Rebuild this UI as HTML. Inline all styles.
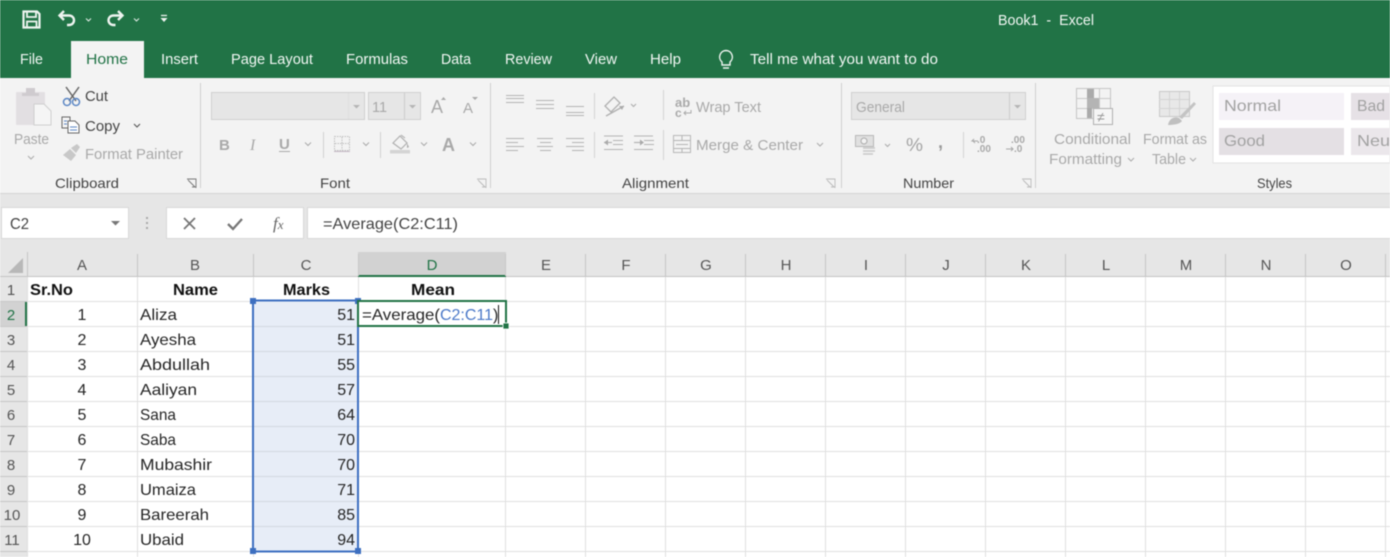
<!DOCTYPE html>
<html><head><meta charset="utf-8"><title>Book1 - Excel</title>
<style>
html,body{margin:0;padding:0;background:#fff;width:1390px;height:557px;overflow:hidden}
svg{display:block;filter:blur(.45px)}
text{font-family:"Liberation Sans",sans-serif;font-size:15px;white-space:pre}
.w{fill:#f2f7f4}.g{fill:#a9a9a9}.d{fill:#444}.l{fill:#444;font-size:14px}
.c{fill:#262626;font-size:16px}.b{font-weight:bold;fill:#111}
.h{fill:#555;font-size:15px}
.lg{stroke:#e0e0e0;stroke-width:1}
.ic{fill:none;stroke:#b5b5b5;stroke-width:1.3}
.ar{fill:none;stroke:#aaa;stroke-width:1}
.ln{stroke:#b8b8b8;stroke-width:1}
</style></head><body>
<svg width="1390" height="557" viewBox="0 0 1390 557" xmlns="http://www.w3.org/2000/svg">
<rect width="1390" height="557" fill="#fff"/>
<rect width="1390" height="78" fill="#217346"/>
<!-- QAT -->
<path d="M23.500 11.500h13.500l2.500 2.500v13.500h-16z" fill="none" stroke="#eef4f0" stroke-width="2.200"/>
<path d="M27 11.500v5.500h9v-5.500M27 27.500v-6h9.500v6" fill="none" stroke="#eef4f0" stroke-width="1.800"/>
<path d="M64 11l-4.500 4.500 4.500 4.500M60 15.500h9c3 0 5 2.200 5 4.800s-2 4.700-5 4.700h-2" fill="none" stroke="#eef4f0" stroke-width="2.400"/>
<path d="M86 18.500l2.500 2.500 2.500-2.500M134 18.500l2.500 2.500 2.500-2.500" fill="none" stroke="#dfeae4" stroke-width="1.100"/>
<path d="M118 11l4.500 4.500-4.500 4.500M122.500 15.500h-9c-3 0-5 2.200-5 4.800s2 4.700 5 4.700h2" fill="none" stroke="#eef4f0" stroke-width="2.400"/>
<path d="M161 15.500h6" stroke="#eef4f0" stroke-width="1.300"/><path d="M160.500 18h7l-3.500 4z" fill="#eef4f0"/>
<text class="w" x="998" y="25" textLength="96" lengthAdjust="spacingAndGlyphs">Book1  -  Excel</text>
<!-- Tabs -->
<rect x="71" y="41" width="73" height="38" fill="#f3f3f3"/>
<text class="w" x="20" y="64" textLength="23" lengthAdjust="spacingAndGlyphs">File</text>
<text x="86" y="64" fill="#217346" textLength="42" lengthAdjust="spacingAndGlyphs">Home</text>
<text class="w" x="161" y="64" textLength="37" lengthAdjust="spacingAndGlyphs">Insert</text>
<text class="w" x="231" y="64" textLength="82" lengthAdjust="spacingAndGlyphs">Page Layout</text>
<text class="w" x="346" y="64" textLength="62" lengthAdjust="spacingAndGlyphs">Formulas</text>
<text class="w" x="441" y="64" textLength="30" lengthAdjust="spacingAndGlyphs">Data</text>
<text class="w" x="505" y="64" textLength="47" lengthAdjust="spacingAndGlyphs">Review</text>
<text class="w" x="585" y="64" textLength="32" lengthAdjust="spacingAndGlyphs">View</text>
<text class="w" x="650" y="64" textLength="31" lengthAdjust="spacingAndGlyphs">Help</text>
<path d="M726 50.500a6.500 6.500 0 0 1 4 11.500v3h-8v-3a6.500 6.500 0 0 1 4-11.500zM723 68h6" fill="none" stroke="#eef4f0" stroke-width="1.400"/>
<text class="w" x="750" y="64" textLength="188" lengthAdjust="spacingAndGlyphs">Tell me what you want to do</text>
<!-- Ribbon -->
<rect y="78" width="1390" height="116" fill="#f3f3f3"/>
<rect y="193" width="1390" height="1" fill="#d4d4d4"/>
<rect y="194" width="1390" height="58" fill="#e6e6e6"/>
<g stroke="#cfcfcf"><path d="M200.500 83v105M490.500 83v105M841.500 83v105M1035.500 83v105"/></g>
<!-- Clipboard -->
<rect x="16" y="92" width="29" height="33" rx="1" fill="#e2dfe2"/><rect x="26" y="88" width="9" height="7" fill="#cfcbcf"/><rect x="22" y="93" width="17" height="3" fill="#cfcbcf"/>
<path d="M34 104h10l7 7v14H34z" fill="#f5f5f5" stroke="#cfcfcf"/>
<text class="g" x="14" y="144" textLength="35" lengthAdjust="spacingAndGlyphs">Paste</text>
<path d="M28 156l3 3 3-3" class="ar"/>
<path d="M66 87l10 14M79 87L69 101" stroke="#666" stroke-width="1.500" fill="none"/><circle cx="67" cy="102" r="3.500" fill="none" stroke="#5b86c4" stroke-width="1.500"/><circle cx="76" cy="102" r="3.500" fill="none" stroke="#5b86c4" stroke-width="1.500"/>
<text class="d" x="85" y="101" textLength="23" lengthAdjust="spacingAndGlyphs">Cut</text>
<path d="M62 117h8v11h-8z" fill="#f5f5f5" stroke="#666"/><path d="M68 121h7l4 4v8H68z" fill="#fff" stroke="#666"/><path d="M64 121h3M64 124h3M70 127h7M70 130h7" stroke="#5b86c4"/>
<text class="d" x="85" y="131" textLength="35" lengthAdjust="spacingAndGlyphs">Copy</text>
<path d="M134 124l3 3 3-3" fill="none" stroke="#555" stroke-width="1.100"/>
<path d="M63 155l7-6 6 6-5 6zM71 148l6-4 3 3-4 6z" fill="#c8c8c8"/>
<text class="g" x="85" y="159" textLength="98" lengthAdjust="spacingAndGlyphs">Format Painter</text>
<text class="l" x="55" y="188" textLength="64" lengthAdjust="spacingAndGlyphs">Clipboard</text>
<path d="M187 179h9v9M188 180l7 7M192 187h4v-4" fill="none" stroke="#777" stroke-width=".9"/>
<!-- Font -->
<rect x="211.500" y="92.500" width="153" height="27" fill="#e6e6e6" stroke="#d0d0d0"/><path d="M348.500 93v26" class="lg" stroke="#ccc"/>
<path d="M353 105l3.500 3.500 3.500-3.500z" fill="#b5b5b5"/>
<rect x="368.500" y="92.500" width="52" height="27" fill="#e6e6e6" stroke="#d0d0d0"/><path d="M404.500 93v26" stroke="#ccc"/>
<path d="M409 105l3.500 3.500 3.500-3.500z" fill="#b5b5b5"/>
<text class="g" x="372" y="112" textLength="15" lengthAdjust="spacingAndGlyphs">11</text>
<text class="g" x="431" y="113" style="font-size:18px">A</text><path d="M441 100l2.500-3 2.500 3z" fill="#aaa"/>
<text class="g" x="463" y="113" style="font-size:15px">A</text><path d="M472 97h6l-3 3z" fill="#aaa"/>
<text x="219" y="150" class="g" style="font-size:15px;font-weight:bold">B</text>
<text x="250" y="150" class="g" style="font-size:16px;font-style:italic;font-family:'Liberation Serif',serif">I</text>
<text x="279" y="149" class="g" style="font-size:15px;font-weight:bold">U</text><path d="M279 151.500h11" stroke="#aaa"/>
<path d="M305 142.500l3 3 3-3M363 142.500l3 3 3-3M421 142.500l3 3 3-3M470 142.500l3 3 3-3" class="ar"/>
<path d="M323.500 132v26M380.500 132v26" stroke="#d0d0d0"/>
<rect x="334.500" y="136.500" width="15" height="14" fill="none" stroke="#c0c0c0" stroke-dasharray="1.500 1"/><path d="M342 137v13M335 143.500h14" stroke="#c0c0c0" stroke-dasharray="1.500 1"/><path d="M334 151.500h16" stroke="#c4b8c4"/>
<path d="M393 143l7-7 7 7-6 6z" fill="none" stroke="#b0b0b0" stroke-width="1.200"/><path d="M401 135l4 3" stroke="#aaa"/><path d="M407 143l2 4-2 1z" fill="#aaa"/><rect x="390" y="150" width="20" height="3.500" fill="#d4d4d4"/>
<text x="442" y="151" class="g" style="font-size:18px;font-weight:bold">A</text>
<text class="l" x="320" y="188" textLength="30" lengthAdjust="spacingAndGlyphs">Font</text>
<path d="M477 179h9v9M478 180l7 7M482 187h4v-4" fill="none" stroke="#bbb" stroke-width=".9"/>
<!-- Alignment -->
<g stroke="#b4b4b4" stroke-width="1"><path d="M506 95.500h18M506 98.500h18M506 102.500h18M536 100.500h18M536 104.500h18M536 108.500h18M566 106.500h18M566 112.500h18M566 115.500h18"/>
<path d="M506 138.500h18M506 142.500h12M506 146.500h18M506 150.500h12M537 138.500h16M540 142.500h11M537 146.500h16M540 150.500h11M566 138.500h18M572 142.500h12M566 146.500h18M572 150.500h12"/></g>
<path d="M594.500 93v26M594.500 132v26M663.500 90v30M663.500 130v30" stroke="#d4d4d4"/>
<path d="M605 106l9-9 6 6-9 9zM606 116l18-10" fill="none" stroke="#b0b0b0" stroke-width="1.300"/><path d="M624 106l-5 0 3 4z" fill="#aaa"/>
<path d="M631 104l2.500 2.500 2.500-2.500" class="ar"/>
<g stroke="#b4b4b4"><path d="M604 136h19M613 140.500h10M613 144.500h10M604 149.500h19M634 136h19M644 140.500h10M644 144.500h10M634 149.500h19"/><path d="M604 142.500h8M641 142.500h-7" stroke-width="1.300"/></g><path d="M604 142.500l4-3v6zM644 142.500l-4-3v6z" fill="#aaa"/>
<text x="675" y="107" style="font-size:13px;font-weight:bold" fill="#aaa">ab</text><text x="675" y="117" style="font-size:12px;font-weight:bold" fill="#aaa">c</text>
<path d="M691 110v3h-7M686 111l-2 2 2 2" class="ar"/>
<text class="g" x="696" y="112" textLength="65" lengthAdjust="spacingAndGlyphs">Wrap Text</text>
<rect x="673.500" y="135.500" width="17" height="17" fill="none" stroke="#b8b8b8"/><path d="M674 140.500h16M674 148.500h16M682 136v4M682 149v3M676 144.500h12" stroke="#b4b4b4"/>
<text class="g" x="696" y="150" textLength="107" lengthAdjust="spacingAndGlyphs">Merge &amp; Center</text>
<path d="M817 143l3 3 3-3" class="ar"/>
<text class="l" x="622" y="188" textLength="67" lengthAdjust="spacingAndGlyphs">Alignment</text>
<path d="M826 179h9v9M827 180l7 7M831 187h4v-4" fill="none" stroke="#bbb" stroke-width=".9"/>
<!-- Number -->
<rect x="851.500" y="92.500" width="174" height="27" fill="#e6e6e6" stroke="#d0d0d0"/><path d="M1009.500 93v26" stroke="#ccc"/>
<path d="M1014 105l3.500 3.500 3.500-3.500z" fill="#b5b5b5"/>
<text class="g" x="856" y="112" textLength="49" lengthAdjust="spacingAndGlyphs">General</text>
<rect x="855.500" y="135.500" width="18" height="11" fill="#e0e0e0" stroke="#b8b8b8"/><circle cx="864" cy="141" r="3" fill="#f3f3f3" stroke="#aaa"/><path d="M863 148h12M863 151h12M863 154h10" stroke="#c8c8c8" stroke-width="1.500"/>
<path d="M885 144l2.500 2.500 2.500-2.500" class="ar"/>
<text x="906" y="151" fill="#a4a4a4" style="font-size:18px" textLength="17" lengthAdjust="spacingAndGlyphs">%</text>
<text x="938" y="148" fill="#999" style="font-size:18px;font-weight:bold">,</text>
<path d="M963.500 132v26" stroke="#d4d4d4"/>
<text x="977" y="143" class="g" style="font-size:10px;font-weight:bold">.0</text><text x="977" y="152" class="g" style="font-size:10px;font-weight:bold">.00</text><path d="M973 141h-1l2-2M973 141l2 2M973 141h5" stroke="#a8a8a8" fill="none"/>
<text x="1011" y="143" class="g" style="font-size:10px;font-weight:bold">.00</text><text x="1014" y="152" class="g" style="font-size:10px;font-weight:bold">.0</text><path d="M1006 149h7M1011 147l2 2-2 2" stroke="#a8a8a8" fill="none"/>
<text class="l" x="903" y="188" textLength="51" lengthAdjust="spacingAndGlyphs">Number</text>
<path d="M1022 179h9v9M1023 180l7 7M1027 187h4v-4" fill="none" stroke="#bbb" stroke-width=".9"/>
<!-- Styles -->
<rect x="1076.500" y="88.500" width="34" height="30" fill="#f3f3f3" stroke="#c4c4c4"/>
<path d="M1076 98.500h34M1076 108.500h34M1087.500 88v30M1099.500 88v30" stroke="#c8c8c8"/>
<rect x="1087" y="89" width="7" height="9" fill="#aaa"/><rect x="1087" y="98" width="12" height="10" fill="#b4b4b4"/><rect x="1087" y="108" width="5" height="10" fill="#aaa"/>
<rect x="1093.500" y="108.500" width="19" height="16" fill="#f5f5f5" stroke="#b0b0b0"/><text x="1097" y="122" fill="#999" style="font-size:14px">≠</text>
<rect x="1159.500" y="91.500" width="30" height="25" fill="#e8e8e8" stroke="#c8c8c8"/>
<path d="M1159 99.500h30M1159 108.500h30M1169.500 92v24M1179.500 92v24" stroke="#d4d4d4"/>
<path d="M1194 102l2 2-14 15-3-2z" fill="#c4c4c4"/><path d="M1168 125c1-6 6-9 11-7l3 3c-2 3-8 4-14 4z" fill="#c0c0c0"/>
<text class="g" x="1054" y="144" textLength="77" lengthAdjust="spacingAndGlyphs">Conditional</text>
<text class="g" x="1049" y="164" textLength="73" lengthAdjust="spacingAndGlyphs">Formatting</text>
<path d="M1128 158l3 3 3-3M1190 158l3 3 3-3" class="ar"/>
<text class="g" x="1143" y="144" textLength="64" lengthAdjust="spacingAndGlyphs">Format as</text>
<text class="g" x="1152" y="164" textLength="34" lengthAdjust="spacingAndGlyphs">Table</text>
<rect x="1213" y="86" width="177" height="77" fill="#fff" stroke="#e2e2e2"/>
<rect x="1219" y="93" width="125" height="27" fill="#f5f2f7"/><rect x="1351" y="93" width="39" height="27" fill="#e6e1e6"/>
<rect x="1219" y="128" width="125" height="27" fill="#e4e0e4"/><rect x="1351" y="128" width="39" height="27" fill="#ebe7eb"/>
<text fill="#a2a2a2" style="font-size:16px" x="1224" y="111" textLength="57" lengthAdjust="spacingAndGlyphs">Normal</text>
<text fill="#a2a2a2" style="font-size:16px" x="1357" y="111" textLength="28" lengthAdjust="spacingAndGlyphs">Bad</text>
<text fill="#a2a2a2" style="font-size:16px" x="1224" y="146" textLength="41" lengthAdjust="spacingAndGlyphs">Good</text>
<text fill="#a2a2a2" style="font-size:16px" x="1357" y="146" textLength="33" lengthAdjust="spacingAndGlyphs">Neu</text>
<text class="l" x="1257" y="188" textLength="35" lengthAdjust="spacingAndGlyphs">Styles</text>
<!-- Formula bar -->
<rect x="1.500" y="207.500" width="127" height="31" fill="#fff" stroke="#d8d8d8"/>
<text fill="#444" style="font-size:16px" x="10" y="229" textLength="19" lengthAdjust="spacingAndGlyphs">C2</text>
<path d="M111 221h9l-4.500 4.500z" fill="#777"/>
<g fill="#aaa"><rect x="146" y="217" width="2" height="2"/><rect x="146" y="222" width="2" height="2"/><rect x="146" y="227" width="2" height="2"/></g>
<rect x="166.500" y="207.500" width="137" height="31" fill="#fff" stroke="#d8d8d8"/>
<path d="M184 218l11 11M195 218l-11 11" stroke="#777" stroke-width="1.800"/>
<path d="M228 224l5 5 9-10" fill="none" stroke="#777" stroke-width="2.300"/>
<text x="273" y="229" fill="#666" style="font-family:'Liberation Serif',serif;font-style:italic;font-size:17px">f<tspan style="font-size:13px">x</tspan></text>
<rect x="307.500" y="207.500" width="1083" height="31" fill="#fff" stroke="#d8d8d8"/>
<text fill="#444" style="font-size:16px" x="323" y="229" textLength="135" lengthAdjust="spacingAndGlyphs">=Average(C2:C11)</text>
<!-- Sheet headers -->
<rect y="252" width="1390" height="25" fill="#e6e6e6"/>
<rect y="277" width="27" height="280" fill="#e6e6e6"/>
<path d="M8 273l15-15v15z" fill="#b8b8b8"/>
<rect x="358" y="252" width="148" height="24" fill="#d2d2d2"/>
<rect y="302" width="25" height="24" fill="#d2d2d2"/>
<rect x="25" y="301" width="2" height="25" fill="#217346"/>
<rect y="276" width="1390" height="1" fill="#c4c4c4"/>
<rect x="358" y="275" width="148" height="2" fill="#217346"/>
<!-- Grid -->
<g stroke="#e0e0e0" stroke-width="1">
<path d="M27.500 277V557M137.500 277V557M253.500 277V557M358.500 277V557M505.500 277V557M585.500 277V557M665.500 277V557M745.500 277V557M825.500 277V557M905.500 277V557M985.500 277V557M1065.500 277V557M1145.500 277V557M1225.500 277V557M1305.500 277V557M1385.500 277V557"/>
<path d="M27 301.500H1390M27 326.500H1390M27 351.500H1390M27 376.500H1390M27 401.500H1390M27 426.500H1390M27 451.500H1390M27 476.500H1390M27 501.500H1390M27 526.500H1390M27 551.500H1390"/>
</g>
<g stroke="#c6c6c6"><path d="M27.500 252v25M137.500 254v22M253.500 254v22M358.500 254v22M505.500 254v22M585.500 254v22M665.500 254v22M745.500 254v22M825.500 254v22M905.500 254v22M985.500 254v22M1065.500 254v22M1145.500 254v22M1225.500 254v22M1305.500 254v22M1385.500 254v22"/>
<path d="M0 301.500h27M0 326.500h27M0 351.500h27M0 376.500h27M0 401.500h27M0 426.500h27M0 451.500h27M0 476.500h27M0 501.500h27M0 526.500h27M0 551.500h27"/></g>
<g class="h" text-anchor="middle">
<text class="h" x="82" y="270">A</text><text class="h" x="195" y="270">B</text><text class="h" x="306" y="270">C</text><text x="432" y="270" fill="#217346">D</text><text class="h" x="546" y="270">E</text><text class="h" x="626" y="270">F</text><text class="h" x="706" y="270">G</text><text class="h" x="786" y="270">H</text><text class="h" x="866" y="270">I</text><text class="h" x="946" y="270">J</text><text class="h" x="1026" y="270">K</text><text class="h" x="1106" y="270">L</text><text class="h" x="1186" y="270">M</text><text class="h" x="1266" y="270">N</text><text class="h" x="1346" y="270">O</text>
<text class="h" x="11" y="295">1</text><text x="11" y="320" fill="#217346">2</text><text class="h" x="11" y="345">3</text><text class="h" x="11" y="370">4</text><text class="h" x="11" y="395">5</text><text class="h" x="11" y="420">6</text><text class="h" x="11" y="445">7</text><text class="h" x="11" y="470">8</text><text class="h" x="11" y="495">9</text><text class="h" x="12" y="520">10</text><text class="h" x="12" y="545">11</text>
</g>
<!-- Selection fill -->
<rect x="254" y="301" width="104" height="250" fill="#e7edf7"/>
<g stroke="#d3d8e0"><path d="M254 326.500h104M254 351.500h104M254 376.500h104M254 401.500h104M254 426.500h104M254 451.500h104M254 476.500h104M254 501.500h104M254 526.500h104"/></g>
<!-- Cells -->
<text class="c b" x="30" y="295" textLength="43" lengthAdjust="spacingAndGlyphs">Sr.No</text>
<text class="c b" x="173" y="295" textLength="45" lengthAdjust="spacingAndGlyphs">Name</text>
<text class="c b" x="283" y="295" textLength="47" lengthAdjust="spacingAndGlyphs">Marks</text>
<text class="c b" x="411" y="295" textLength="44" lengthAdjust="spacingAndGlyphs">Mean</text>
<g text-anchor="middle">
<text class="c" x="82" y="320">1</text><text class="c" x="82" y="345">2</text><text class="c" x="82" y="370">3</text><text class="c" x="82" y="395">4</text><text class="c" x="82" y="420">5</text><text class="c" x="82" y="445">6</text><text class="c" x="82" y="470">7</text><text class="c" x="82" y="495">8</text><text class="c" x="82" y="520">9</text><text class="c" x="82" y="545">10</text>
</g>
<text class="c" x="140" y="320" textLength="37" lengthAdjust="spacingAndGlyphs">Aliza</text>
<text class="c" x="140" y="345" textLength="56" lengthAdjust="spacingAndGlyphs">Ayesha</text>
<text class="c" x="140" y="370" textLength="70" lengthAdjust="spacingAndGlyphs">Abdullah</text>
<text class="c" x="140" y="395" textLength="57" lengthAdjust="spacingAndGlyphs">Aaliyan</text>
<text class="c" x="140" y="420" textLength="36" lengthAdjust="spacingAndGlyphs">Sana</text>
<text class="c" x="140" y="445" textLength="36" lengthAdjust="spacingAndGlyphs">Saba</text>
<text class="c" x="140" y="470" textLength="72" lengthAdjust="spacingAndGlyphs">Mubashir</text>
<text class="c" x="140" y="495" textLength="56" lengthAdjust="spacingAndGlyphs">Umaiza</text>
<text class="c" x="140" y="520" textLength="69" lengthAdjust="spacingAndGlyphs">Bareerah</text>
<text class="c" x="140" y="545" textLength="44" lengthAdjust="spacingAndGlyphs">Ubaid</text>
<g text-anchor="end">
<text class="c" x="355" y="320">51</text><text class="c" x="355" y="345">51</text><text class="c" x="355" y="370">55</text><text class="c" x="355" y="395">57</text><text class="c" x="355" y="420">64</text><text class="c" x="355" y="445">70</text><text class="c" x="355" y="470">70</text><text class="c" x="355" y="495">71</text><text class="c" x="355" y="520">85</text><text class="c" x="355" y="545">94</text>
</g>
<!-- Range border -->
<rect x="253" y="300.500" width="105" height="251" fill="none" stroke="#3d6fc0" stroke-width="2"/>
<rect x="250" y="298" width="6" height="6" fill="#3d6fc0"/><rect x="355" y="298" width="6" height="6" fill="#3d6fc0"/>
<rect x="250" y="548" width="6" height="6" fill="#3d6fc0"/><rect x="355" y="548" width="6" height="6" fill="#3d6fc0"/>
<!-- Active cell -->
<rect x="358" y="301" width="148" height="25" fill="#fff" stroke="#217346" stroke-width="2"/>
<rect x="503" y="323" width="6" height="6" fill="#217346" stroke="#fff" stroke-width=".8"/>
<text class="c" x="362" y="320" textLength="78" lengthAdjust="spacingAndGlyphs">=Average(</text>
<text x="440" y="320" fill="#4a78c8" style="font-size:16px" textLength="53" lengthAdjust="spacingAndGlyphs">C2:C11</text>
<text class="c" x="493" y="320">)</text>
<path d="M498.500 305v19" stroke="#111"/>
</svg>
</body></html>
